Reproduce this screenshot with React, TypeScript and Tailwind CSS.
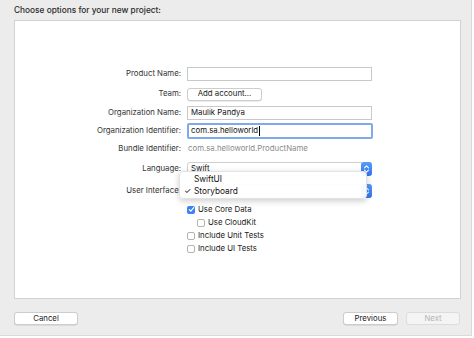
import React from "react";

const font = { fontFamily: "Inter, 'Noto Sans', sans-serif" };

function Stepper({ className = "" }: { className?: string }) {
  return (
    <div className={"w-[11px] h-[14px] rounded-[3px] bg-gradient-to-b from-[#5a9bf8] to-[#2f74f0] flex items-center justify-center " + className}>
      <svg width="7" height="10" viewBox="0 0 7 10" fill="none" stroke="white" strokeWidth="1.1" strokeLinecap="round" strokeLinejoin="round">
        <path d="M1.5 3.8 L3.5 1.8 L5.5 3.8" />
        <path d="M1.5 6.2 L3.5 8.2 L5.5 6.2" />
      </svg>
    </div>
  );
}

function Row({ label, h, children }: { label: string; h: string; children?: React.ReactNode }) {
  return (
    <div className={"flex items-center " + h}>
      <div className="w-[166px] text-right text-[#333] pr-0 leading-none">{label}</div>
      <div className="ml-[6px] flex items-center">{children}</div>
    </div>
  );
}

function Check({ checked = false }: { checked?: boolean }) {
  if (checked)
    return (
      <div className="w-[8px] h-[8px] rounded-[2px] bg-[#3a80f6] flex items-center justify-center">
        <svg width="7" height="7" viewBox="0 0 7 7" fill="none" stroke="white" strokeWidth="1.2" strokeLinecap="round" strokeLinejoin="round">
          <path d="M1.3 3.6 L2.8 5.1 L5.7 1.7" />
        </svg>
      </div>
    );
  return <div className="w-[8px] h-[8px] rounded-[2px] bg-white border border-[#b3b3b3]" />;
}

export default function App() {
  return (
    <div className="w-[474px] h-[338px] bg-white" style={font}>
      <div className="relative w-[472px] h-[336px] bg-[#ececec] border-r border-b border-[#dadada] flex flex-col text-[7.8px]">
        <div className="h-[20px] pl-[14px] pt-[1px] flex items-center text-[8.3px] font-medium text-[#2b2b2b]">
          Choose options for your new project:
        </div>
        <div className="ml-[14px] w-[447px] h-[279px] bg-white border border-[#d2d2d2] pt-[43px]">
          <Row label="Product Name:" h="h-[20px]">
            <div className="w-[185px] h-[14px] border border-[#c9c9c9] bg-white" />
          </Row>
          <Row label="Team:" h="h-[20px]">
            <div className="w-[75px] h-[13px] rounded-[3px] border border-[#cdcdcd] bg-white shadow-[0_0.5px_0.5px_rgba(0,0,0,0.15)] flex items-center justify-center text-[#222]">
              Add account...
            </div>
          </Row>
          <Row label="Organization Name:" h="h-[18px]">
            <div className="w-[185px] h-[14px] border border-[#c9c9c9] bg-white flex items-center pl-[3px] text-[#111]">
              Maulik Pandya
            </div>
          </Row>
          <Row label="Organization Identifier:" h="h-[18px]">
            <div className="w-[186px] h-[16px] rounded-[2px] border-2 border-[#7fa9ec] bg-white flex items-center pl-[2px] text-[#111]">
              com.sa.helloworld
              <span className="inline-block w-[1px] h-[10px] bg-black ml-[0.5px]" />
            </div>
          </Row>
          <Row label="Bundle Identifier:" h="h-[18px]">
            <div className="pl-[1px] text-[#8a8a8a]">com.sa.helloworld.ProductName</div>
          </Row>
          <Row label="Language:" h="h-[21px]">
            <div className="w-[185px] h-[14px] rounded-[3px] border border-[#cfcfcf] bg-white flex items-center justify-between pl-[3px] text-[#111]">
              <span>Swift</span>
              <Stepper className="-mr-[1px]" />
            </div>
          </Row>
          <Row label="User Interface:" h="h-[23px]">
            <div className="w-[185px] h-[14px] rounded-[3px] border border-[#cfcfcf] bg-white flex items-center justify-end">
              <Stepper className="-mr-[1px]" />
            </div>
          </Row>
          <div className="pl-[172px] mt-[1px] text-[#222]">
            <div className="h-[13px] flex items-center gap-[3px]">
              <Check checked />
              <span>Use Core Data</span>
            </div>
            <div className="h-[13px] flex items-center gap-[3px] ml-[10px]">
              <Check />
              <span>Use CloudKit</span>
            </div>
            <div className="h-[13px] flex items-center gap-[3px]">
              <Check />
              <span>Include Unit Tests</span>
            </div>
            <div className="h-[13px] flex items-center gap-[3px]">
              <Check />
              <span>Include UI Tests</span>
            </div>
          </div>
        </div>
        <div className="mt-[13px] pl-[14px] pr-[11px] flex items-center">
          <div className="w-[64px] h-[13px] rounded-[3px] border border-[#cdcdcd] bg-white shadow-[0_0.5px_0.5px_rgba(0,0,0,0.15)] flex items-center justify-center text-[#222]">
            Cancel
          </div>
          <div className="ml-auto w-[55px] h-[13px] rounded-[3px] border border-[#cdcdcd] bg-white shadow-[0_0.5px_0.5px_rgba(0,0,0,0.15)] flex items-center justify-center text-[#222]">
            Previous
          </div>
          <div className="ml-[8px] w-[54px] h-[13px] rounded-[3px] border border-[#dcdcdc] bg-[#f4f4f4] flex items-center justify-center text-[#b4b4b4]">
            Next
          </div>
        </div>

        <div className="absolute left-[179px] top-[171px] w-[188px] h-[28px] rounded-[4px] bg-white/95 border border-[#e2e2e2] shadow-[0_2px_6px_rgba(0,0,0,0.2)] pt-[1px] text-[8.3px] text-[#111]">
          <div className="h-[12px] flex items-center pl-[14px]">SwiftUI</div>
          <div className="h-[12px] flex items-center">
            <span className="w-[14px] pl-[4px] text-[8px]">✓</span>
            <span>Storyboard</span>
          </div>
        </div>
      </div>
    </div>
  );
}
